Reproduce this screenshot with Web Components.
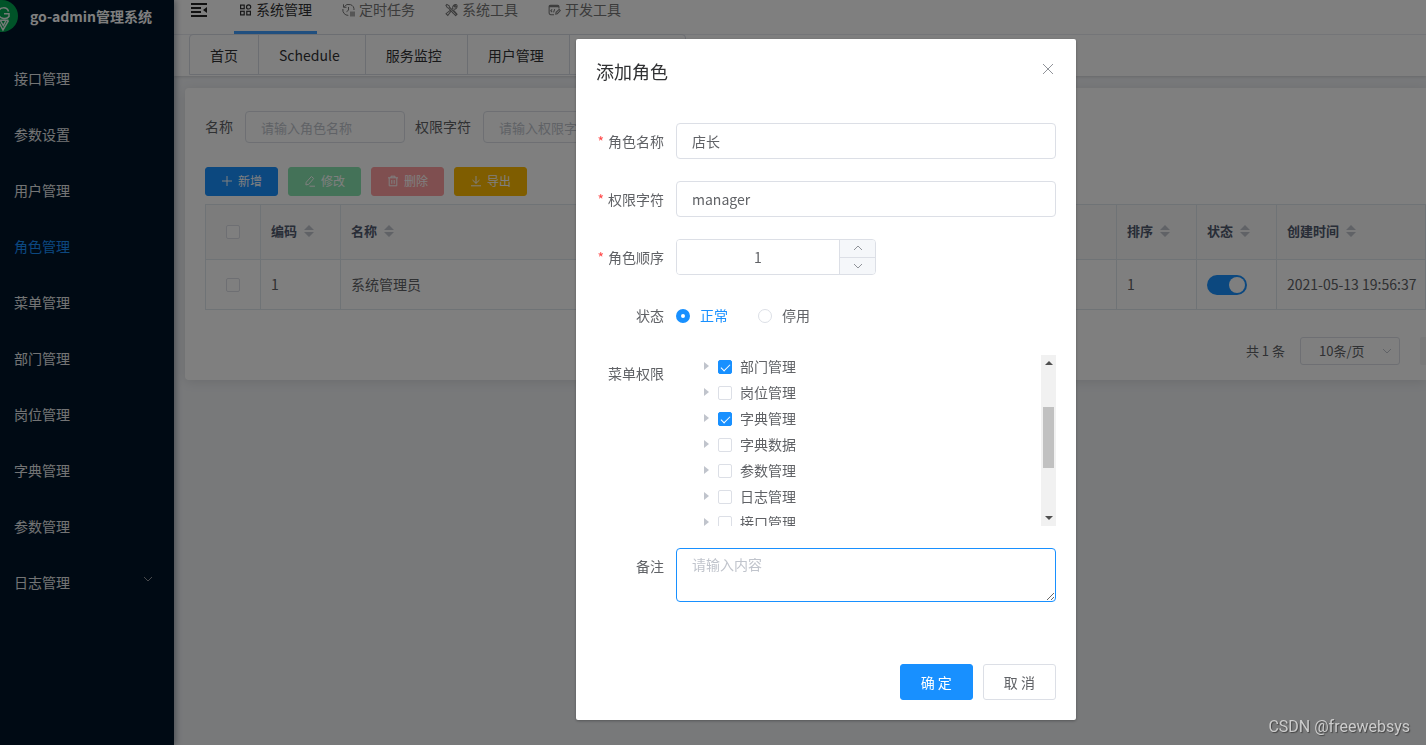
<!DOCTYPE html>
<html lang="zh-CN">
<head>
<meta charset="utf-8">
<meta name="viewport" content="width=device-width, initial-scale=1">
<title>go-admin管理系统</title>
<style>
  html, body { margin: 0; height: 100%; }
  body { overflow: hidden; font: 14px/20px "Noto Sans CJK SC", "Noto Sans", sans-serif; color: #606266; }
</style>
</head>
<body>
<ga-app></ga-app>
<script>
const ICONS = {
  fold: ['0 0 16 14', '<path d="M0 1h16M0 5h10M0 9h10M0 13h16" fill="none" stroke="currentColor" stroke-width="2"/><path d="M16 4v6l-4-3z" fill="currentColor"/>'],
  grid: ['0 0 13 13', '<g fill="none" stroke="currentColor" stroke-width="1.2"><rect x="1.6" y="1.6" width="3.6" height="3.6"/><circle cx="9.6" cy="3.4" r="2.1"/><rect x="1.6" y="7.8" width="3.6" height="3.6"/><rect x="7.8" y="7.8" width="3.6" height="3.6"/></g>'],
  timer: ['0 0 13 13', '<g fill="none" stroke="currentColor"><path d="M2.300 3.200A5.300 5.300 0 0 1 12 6.500M1.500.8v3h3M.9 5.500A5.400 5.400 0 0 0 6.300 11.900M6.500 3.500v3.200l-2 1.500"/></g><path d="M8 8h5v5H8z" fill="currentColor" opacity=".6"/>'],
  tools: ['0 0 14 14', '<g fill="none" stroke="currentColor" stroke-width="1.100"><path d="M1 2l1-1 2.500 1.500.3 1.500 7.800 7.700-1.300 1.300L3.800 5 2.500 4.500zM9.300 7.400L13 11.600 11.600 13 7.500 9.300M6.300 8.500L3 12.900 1.100 11l4.500-3.500M7.800 5.700l.5-.5C7.800 3 9.500.8 12 1.200L10 3.100l.9.900L13 2.300c.5 2.500-1.500 4.300-4 3.700"/></g>'],
  dev: ['0 0 14 13', '<g fill="none" stroke="currentColor" stroke-width="1.100"><path d="M6.500 11.500H3A1.800 1.800 0 0 1 1.200 9.700V2.800A1.400 1.400 0 0 1 2.600 1.400h7.800a1.400 1.400 0 0 1 1.400 1.400v2M1.200 3h10.600M4.500 5.800L3 7.300l1.500 1.500M7.200 5.500L6 9M8.400 10.800l.3-1.800L12 5.800l1.300 1.300L10 10.500z"/></g><path d="M2 1.400h9v1.700H2z" fill="currentColor"/>'],
  plus: ['0 0 12 12', '<path d="M6 1v10M1 6h10" stroke="currentColor" fill="none"/>'],
  edit: ['0 0 12 12', '<path d="M2.200 7.300L7.400 1.500l2.300 2-5.100 5.900-2.700.5zM5.500 11.200H11" stroke="currentColor" fill="none"/>'],
  trash: ['0 0 12 12', '<path d="M1 2.800h10M4 2.800V1.200h4v1.600M2.200 2.800v8h7.600v-8M4.800 5v3.800M7.200 5v3.800" stroke="currentColor" fill="none"/>'],
  download: ['0 0 12 12', '<path d="M6 1v7.300M2.500 5L6 8.400 9.500 5M1 10.800h10" stroke="currentColor" fill="none"/>'],
  close: ['0 0 12 12', '<path d="M1 1l10 10M11 1L1 11" stroke="currentColor" fill="none"/>'],
  up: ['0 0 10 6', '<path d="M1 5l4-4 4 4" stroke="currentColor" fill="none"/>'],
  down: ['0 0 10 6', '<path d="M1 1l4 4 4-4" stroke="currentColor" fill="none"/>'],
  sort: ['0 0 10 14', '<path d="M5 1l5 5H0zM0 8h10l-5 5z" fill="currentColor"/>'],
  caret: ['0 0 6 8', '<path d="M0 0l5 4-5 4z" fill="currentColor"/>'],
  logo: ['0 0 32 32', '<circle cx="16" cy="16" r="16" fill="#00a651"/><g fill="none" stroke="#e8f5ee" stroke-width="1.500"><path d="M22.500 11.500C21 6.500 13 6.500 12.500 12.500c-.3 6.500 8 7.500 10.500 4v-2.700h-5M8 20.200h14.500M12 20.500l5 9.500 5.500-9.500M14.500 20.500l2.800 5 2.700-5"/></g>']
};

class GaElement extends HTMLElement {
  connectedCallback() {
    if (this.shadowRoot) return;
    const t = document.createElement('template');
    t.innerHTML = '<style>*{box-sizing:border-box}button,input,select,textarea{font:inherit;color:inherit;margin:0}' +
      'a{color:inherit;text-decoration:none}' + this.css() + '</style>' + this.html();
    this.attachShadow({ mode: 'open' }).append(t.content.cloneNode(true));
  }
  css() { return ':host{display:block}'; }
  html() { return '<slot></slot>'; }
}

customElements.define('ga-icon', class extends GaElement {
  css() { return ':host{display:inline-flex;flex:none;width:12px;height:12px}svg{display:block;width:100%;height:100%}'; }
  html() {
    const [box, body] = ICONS[this.getAttribute('name')];
    return `<svg viewBox="${box}" aria-hidden="true">${body}</svg>`;
  }
});

customElements.define('ga-button', class extends GaElement {
  css() { return `
    :host{display:block}
    button{display:flex;align-items:center;justify-content:center;gap:5px;height:36px;padding:0 20px;border:1px solid #dcdfe6;border-radius:3px;background:#fff;font-size:14px;line-height:20px;white-space:nowrap}
    :host([size=mini]) button{height:29px;padding:0 15px 1px;font-size:12px}
    :host([type]) button{color:#fff}
    :host([type=primary]) button{background:#1890ff;border-color:#1890ff}
    :host([type=success]) button{background:#89e4b0;border-color:#89e4b0}
    :host([type=danger]) button{background:#ff9fa0;border-color:#ff9fa0}
    :host([type=warning]) button{background:#ffba00;border-color:#ffba00}`; }
  html() { return `<button type="button"><slot></slot></button>`; }
});

customElements.define('ga-sidebar', class extends GaElement {
  css() { return `
    :host{display:block;flex:none;width:174px;background:#001529;box-shadow:2px 0 6px rgba(0,21,41,.35);z-index:1;color:#e6e8ea}
    header{display:flex;align-items:center;gap:12px;height:32px;margin:0 0 18px -14px;color:#fff;font-weight:700;white-space:nowrap}
    header ga-icon{width:32px;height:32px}
    ul{list-style:none;margin:0;padding:0}
    a{display:flex;align-items:center;justify-content:space-between;height:56px;padding:0 21px 0 14px}
    a[aria-current]{color:#1890ff}
    a ga-icon{width:10px;height:6px;margin-bottom:6px;color:#909399}`; }
  html() {
    const items = ['接口管理', '参数设置', '用户管理', '角色管理', '菜单管理', '部门管理', '岗位管理', '字典管理', '参数管理', '日志管理'];
    return `<header><ga-icon name="logo"></ga-icon><span>go-admin管理系统</span></header><nav><ul>` +
      items.map((t, i) => `<li><a href="#"${i === 3 ? ' aria-current="page"' : ''}>${t}${i === 9 ? '<ga-icon name="down"></ga-icon>' : ''}</a></li>`).join('') + '</ul></nav>';
  }
});

customElements.define('ga-topnav', class extends GaElement {
  css() { return `
    :host{display:flex;height:34px;padding-left:17px;gap:27px;line-height:18px}
    button{flex:none;display:flex;align-items:center;width:16px;height:20px;padding:0;border:0;background:none;color:#222}
    button ga-icon{width:16px;height:14px}
    nav{display:flex;gap:20px}
    a{display:flex;align-items:flex-start;gap:4px;padding:0 5px;border-bottom:3px solid transparent;white-space:nowrap;color:#777}
    a ga-icon{width:13px;height:20px}
    a[aria-current]{color:#303133;border-color:#409eff}`; }
  html() {
    const items = [['grid', '系统管理'], ['timer', '定时任务'], ['tools', '系统工具'], ['dev', '开发工具']];
    return `<button type="button" aria-label="折叠菜单"><ga-icon name="fold"></ga-icon></button><nav>` +
      items.map(([n, t], i) => `<a href="#"${i ? '' : ' aria-current="page"'}><ga-icon name="${n}"></ga-icon>${t}</a>`).join('') + '</nav>';
  }
});

customElements.define('ga-tabs', class extends GaElement {
  css() { return `
    :host{display:flex;padding:0 15px 1px;border-top:1px solid #e8eaf0}
    nav{display:flex;height:41px;margin-top:-1px;border:1px solid #d8dce5;border-radius:4px 4px 0 0}
    a{display:flex;align-items:center;padding:0 25px 0 20px;border-left:1px solid #d8dce5;color:#303133;white-space:nowrap}
    a:first-child{border-left:0;padding-right:20px}
    a:last-child{width:116px}`; }
  html() {
    return '<nav>' + ['首页', 'Schedule', '服务监控', '用户管理'].map(t => `<a href="#">${t}</a>`).join('') + '<a href="#" aria-current="page"></a></nav>';
  }
});

customElements.define('ga-role-list', class extends GaElement {
  css() { return `
    :host{display:block;padding:23px 0 15px 20px;background:#fff;border-radius:4px 0 0 4px;box-shadow:0 2px 12px rgba(0,0,0,.1)}
    form{display:flex;align-items:center;gap:10px;margin-bottom:24px}
    form div{display:flex;align-items:center;gap:12px}
    form label{padding-bottom:2px}
    form input{width:160px;height:32px;padding:0 15px;border:1px solid #dcdfe6;border-radius:4px;background:#fff;font-size:13px;outline:0}
    ::placeholder{color:#c0c4cc;opacity:1}
    .tools{display:flex;gap:10px;margin-bottom:8px}
    table{width:100%;border-collapse:separate;border-spacing:0;table-layout:fixed;border:1px solid #dfe6ec;border-right:0;border-bottom:0;text-align:left}
    th,td{padding:0 10px;border-right:1px solid #dfe6ec;border-bottom:1px solid #dfe6ec;white-space:nowrap}
    th{height:55px;padding-bottom:2px;background:#f8f8f9;color:#515a6e;font-size:13px;font-weight:700}
    td{height:50px;padding-bottom:1px}
    th span{display:flex;align-items:center;gap:7px}
    th ga-icon{width:10px;height:14px;color:#c0c4cc}
    .pick{padding-bottom:0}
    .pick input{appearance:none;display:block;width:14px;height:14px;margin:0 auto;border:1px solid #dcdfe6;border-radius:2px;background:#fff}
    .toggle{padding:1px 10px 0}
    .switch{appearance:none;display:flex;width:40px;height:20px;border-radius:10px;background:#1890ff}
    .switch::before{content:"";width:16px;height:16px;margin:2px 2px 0 22px;border-radius:8px;background:#fff}
    footer{display:flex;justify-content:flex-end;align-items:center;margin-top:27px;font-size:13px}
    .total{margin-right:15px}
    .size{display:flex;align-items:center;position:relative}
    select{appearance:none;width:100px;height:28px;padding:0 24px 0 18px;border:1px solid #dcdfe6;border-radius:3px;background:#fff}
    .size ga-icon{position:absolute;right:8px;width:10px;height:6px;color:#c0c4cc}
    .prev{width:30px;height:28px;margin:0 -24px 0 20px;border:0;border-radius:2px;background:#f4f4f5}`; }
  html() {
    const th = t => `<th scope="col"><span>${t}<ga-icon name="sort"></ga-icon></span></th>`;
    return `
    <form><div><label for="n">名称</label><input id="n" placeholder="请输入角色名称"></div>
      <div><label for="k">权限字符</label><input id="k" placeholder="请输入权限字符"></div></form>
    <div class="tools">
      <ga-button size="mini" type="primary"><ga-icon name="plus"></ga-icon>新增</ga-button>
      <ga-button size="mini" type="success"><ga-icon name="edit"></ga-icon>修改</ga-button>
      <ga-button size="mini" type="danger"><ga-icon name="trash"></ga-icon>删除</ga-button>
      <ga-button size="mini" type="warning"><ga-icon name="download"></ga-icon>导出</ga-button>
    </div>
    <table>
      <colgroup><col style="width:55px"><col style="width:80px"><col><col style="width:80px"><col style="width:80px"><col style="width:149px"></colgroup>
      <thead><tr><th class="pick"><input type="checkbox" aria-label="全选"></th>${['编码', '名称', '排序', '状态', '创建时间'].map(th).join('')}</tr></thead>
      <tbody><tr><td class="pick"><input type="checkbox" aria-label="选择"></td><td>1</td><td>系统管理员</td><td>1</td><td class="toggle"><input class="switch" type="checkbox" role="switch" aria-label="状态" checked></td><td>2021-05-13 19:56:37</td></tr></tbody>
    </table>
    <footer><span class="total">共 1 条</span><span class="size"><select aria-label="每页条数"><option>10条/页</option></select><ga-icon name="down"></ga-icon></span><button class="prev" type="button" aria-label="上一页"></button></footer>`;
  }
});

customElements.define('ga-field', class extends GaElement {
  css() { return `
    :host{display:flex;margin-bottom:22px}
    .label{flex:none;width:80px;padding-right:12px;line-height:36px;text-align:right;white-space:nowrap}
    :host([required]) .label::before{content:"*";margin-right:4px;color:#ff4949}
    .control{flex:1;min-width:0}`; }
  html() { return '<div class="label"><slot name="label"></slot></div><div class="control"><slot></slot></div>'; }
});

customElements.define('ga-menu-tree', class extends GaElement {
  css() { return `
    :host{display:flex;height:171px;overflow:hidden}
    ul{flex:1;display:flex;flex-direction:column;gap:2px;list-style:none;margin:0;padding:0 0 0 28px}
    li{flex:none;display:flex;align-items:center;height:24px}
    li>ga-icon{width:6px;height:8px;margin:0 8px 2px 0;color:#c0c4cc}
    label{display:flex;align-items:center;gap:8px}
    label span{padding-bottom:2px}
    input{appearance:none;display:flex;justify-content:center;width:14px;height:14px;border:1px solid #dcdfe6;border-radius:2px;background:#fff}
    input:checked{background:#1890ff;border-color:#1890ff}
    input:checked::after{content:"";width:4px;height:8px;margin-top:1px;border:solid #fff;border-width:0 1px 1px 0;transform:rotate(45deg)}
    .bar{display:flex;flex-direction:column;align-items:center;width:15px;padding:6px 2px;background:#f1f1f1}
    .bar i{width:0;height:0;border:4px solid transparent;border-top:0;border-bottom:4px solid #505050}
    .bar i:last-child{border-top:4px solid #505050;border-bottom:0;margin-top:auto}
    .thumb{width:11px;height:61px;margin-top:42px;background:#c1c1c1}`; }
  html() {
    const rows = [['部门管理', 1], ['岗位管理'], ['字典管理', 1], ['字典数据'], ['参数管理'], ['日志管理'], ['接口管理']];
    return '<ul>' + rows.map(([t, c]) => `<li><ga-icon name="caret"></ga-icon><label><input type="checkbox"${c ? ' checked' : ''}><span>${t}</span></label></li>`).join('') +
      '</ul><div class="bar" aria-hidden="true"><i></i><div class="thumb"></div><i></i></div>';
  }
});

customElements.define('ga-dialog', class extends GaElement {
  css() { return `
    :host{display:block;width:500px;background:#fff;border-radius:2px;box-shadow:0 1px 3px rgba(0,0,0,.3)}
    header{display:flex;justify-content:space-between;padding:20px 20px 10px}
    h2{margin:0;font-size:18px;line-height:24px;font-weight:400;color:#303133}
    header button{display:flex;justify-content:center;align-items:center;width:16px;height:20px;padding:0;border:0;background:none;color:#909399}
    .body{padding:30px 20px}
    footer{display:flex;justify-content:flex-end;gap:10px;padding:10px 20px 20px}`; }
  html() {
    return `<header><h2><slot name="title"></slot></h2><button type="button" aria-label="关闭"><ga-icon name="close"></ga-icon></button></header>
      <div class="body"><slot></slot></div><footer><slot name="footer"></slot></footer>`;
  }
});

customElements.define('ga-role-dialog', class extends GaElement {
  css() { return `
    :host{display:block}
    .text{display:block;width:100%;height:36px;padding:0 15px;border:1px solid #dcdfe6;border-radius:4px;outline:0;background:#fff}
    .number{display:flex;width:200px;height:36px;border:1px solid #dcdfe6;border-radius:4px;overflow:hidden}
    .number input{flex:1;min-width:0;padding:0;border:0;outline:0;text-align:center;background:#fff}
    .steps{display:flex;flex-direction:column;width:36px;border-left:1px solid #dcdfe6}
    .steps button{flex:1;display:flex;align-items:center;justify-content:center;padding:0;border:0;background:#f5f7fa}
    .steps button+button{border-top:1px solid #dcdfe6}
    .steps ga-icon{width:10px;height:6px;color:#909399}
    .radios{display:flex;gap:30px;height:36px}
    .radios label{display:flex;align-items:center;gap:10px}
    .radios input{appearance:none;width:14px;height:14px;margin-top:2px;border:1px solid #dcdfe6;border-radius:7px;background:#fff}
    .radios input:checked{border:5px solid #1890ff}
    .radios label:has(:checked){color:#1890ff}
    textarea{display:block;width:100%;height:54px;padding:5px 15px;border:1px solid #1890ff;border-radius:4px;outline:0;line-height:21px;resize:vertical}
    textarea::placeholder{color:#c0c4cc}`; }
  html() { return `
    <ga-dialog role="dialog" aria-label="添加角色">
      <span slot="title">添加角色</span>
      <ga-field required><label slot="label" for="name">角色名称</label><input class="text" id="name" value="店长"></ga-field>
      <ga-field required><label slot="label" for="key">权限字符</label><input class="text" id="key" value="manager"></ga-field>
      <ga-field required><label slot="label" for="sort">角色顺序</label><div class="number"><input id="sort" inputmode="numeric" value="1"><div class="steps"><button type="button" aria-label="增加"><ga-icon name="up"></ga-icon></button><button type="button" aria-label="减少"><ga-icon name="down"></ga-icon></button></div></div></ga-field>
      <ga-field><span slot="label">状态</span><div class="radios" role="radiogroup" aria-label="状态"><label><input type="radio" name="status" checked>正常</label><label><input type="radio" name="status">停用</label></div></ga-field>
      <ga-field><span slot="label">菜单权限</span><ga-menu-tree></ga-menu-tree></ga-field>
      <ga-field><label slot="label" for="remark">备注</label><textarea id="remark" placeholder="请输入内容"></textarea></ga-field>
      <ga-button slot="footer" type="primary">确 定</ga-button>
      <ga-button slot="footer">取 消</ga-button>
    </ga-dialog>`; }
});

customElements.define('ga-app', class extends GaElement {
  css() { return `
    :host{display:block;height:100%}
    .page{display:flex;height:100%;background:#f0f2f5}
    main{flex:1;min-width:0;overflow:hidden}
    .head{background:#fff;box-shadow:0 1px 3px rgba(0,0,0,.12),0 0 3px rgba(0,0,0,.04)}
    ga-role-list{margin:12px 0 0 11px}
    .mask{position:fixed;inset:0;display:flex;justify-content:center;align-items:flex-start;padding:39px 0 0 226px;background:rgba(0,0,0,.5);z-index:10}
    .mark{position:fixed;right:16px;bottom:8px;z-index:11;font:16px/20px Roboto,Arial,sans-serif;color:#ccc;text-shadow:1px 1px 1px #444}`; }
  html() { return `
    <div class="page"><ga-sidebar></ga-sidebar><main><div class="head"><ga-topnav></ga-topnav><ga-tabs></ga-tabs></div><ga-role-list></ga-role-list></main></div>
    <div class="mask"><ga-role-dialog></ga-role-dialog></div>
    <div class="mark">CSDN @freewebsys</div>`; }
});
</script>
</body>
</html>
